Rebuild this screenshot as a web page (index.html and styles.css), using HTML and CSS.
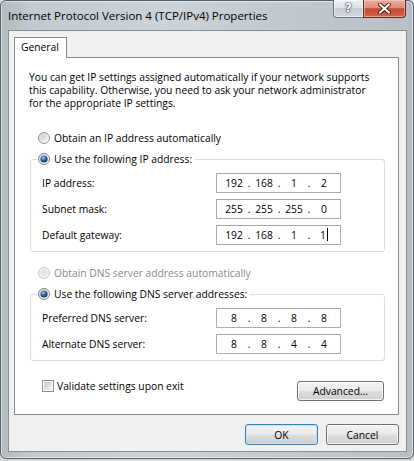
FILE: index.html
```html
<!DOCTYPE html>
<html lang="en">
<head>
<meta charset="utf-8">
<title>Internet Protocol Version 4 (TCP/IPv4) Properties</title>
<link rel="stylesheet" href="styles.css">
</head>
<body>
<svg class="defs" width="0" height="0" aria-hidden="true">
  <defs>
    <linearGradient id="rOuter" x1="0" y1="0" x2="1" y2="1">
      <stop offset="0" stop-color="#dcdcdc"/>
      <stop offset="1" stop-color="#ffffff"/>
    </linearGradient>
    <linearGradient id="rInner" x1="0" y1="0" x2="1" y2="1">
      <stop offset="0" stop-color="#c9c9c9"/>
      <stop offset="1" stop-color="#f4f4f4"/>
    </linearGradient>
    <radialGradient id="rDot" cx="0.4" cy="0.35" r="0.7">
      <stop offset="0" stop-color="#a9d2f2"/>
      <stop offset="0.45" stop-color="#2b6aa0"/>
      <stop offset="1" stop-color="#0b2a4c"/>
    </radialGradient>
    <linearGradient id="cInner" x1="0" y1="0" x2="1" y2="1">
      <stop offset="0" stop-color="#c6cacf"/>
      <stop offset="1" stop-color="#f3f3f3"/>
    </linearGradient>
  </defs>
</svg>
<div class="window">
  <div class="titlebar">
    <div class="title">Internet Protocol Version 4 (TCP/IPv4) Properties</div>
    <div class="caption">
      <div class="cap-help">?</div>
      <div class="cap-close">
        <svg width="13" height="11" viewBox="0 0 13 11">
          <path d="M2 1.5 L11 9.5 M11 1.5 L2 9.5" stroke="#4a1c14" stroke-width="4" stroke-linecap="round"/>
          <path d="M2 1.5 L11 9.5 M11 1.5 L2 9.5" stroke="#ffffff" stroke-width="2.2" stroke-linecap="round"/>
        </svg>
      </div>
    </div>
  </div>
  <div class="client">
    <div class="tabs"><div class="tab">General</div></div>
    <div class="panel">
      <p class="intro">You can get IP settings assigned automatically if your network supports<br>this capability. Otherwise, you need to ask your network administrator<br>for the appropriate IP settings.</p>

      <div class="opt opt-first">
        <svg class="radio" width="12" height="12" viewBox="0 0 12 12"><circle cx="6" cy="6" r="5.5" fill="url(#rOuter)" stroke="#8e8f8f"/><circle cx="6" cy="6" r="3.4" fill="url(#rInner)"/></svg>
        <span>Obtain an IP address automatically</span>
      </div>

      <fieldset class="group">
        <legend class="legend">
          <svg class="radio" width="12" height="12" viewBox="0 0 12 12"><circle cx="6" cy="6" r="5.5" fill="url(#rOuter)" stroke="#7f8488"/><circle cx="6" cy="6" r="3.6" fill="url(#rDot)"/></svg>
          <span>Use the following IP address:</span>
        </legend>
        <div class="rows">
          <div class="field">
            <span class="label">IP address:</span>
            <div class="ip"><span class="oct">192</span><span class="dot">.</span><span class="oct">168</span><span class="dot">.</span><span class="oct">1</span><span class="dot">.</span><span class="oct">2</span></div>
          </div>
          <div class="field">
            <span class="label">Subnet mask:</span>
            <div class="ip"><span class="oct">255</span><span class="dot">.</span><span class="oct">255</span><span class="dot">.</span><span class="oct">255</span><span class="dot">.</span><span class="oct">0</span></div>
          </div>
          <div class="field">
            <span class="label">Default gateway:</span>
            <div class="ip"><span class="oct">192</span><span class="dot">.</span><span class="oct">168</span><span class="dot">.</span><span class="oct">1</span><span class="dot">.</span><span class="oct">1<span class="caret"></span></span></div>
          </div>
        </div>
      </fieldset>

      <div class="opt opt-dns disabled">
        <svg class="radio" width="12" height="12" viewBox="0 0 12 12"><circle cx="6" cy="6" r="5.5" fill="#f4f4f4" stroke="#c4c6c8"/><circle cx="6" cy="6" r="3.4" fill="#e6e6e6"/></svg>
        <span>Obtain DNS server address automatically</span>
      </div>

      <fieldset class="group">
        <legend class="legend">
          <svg class="radio" width="12" height="12" viewBox="0 0 12 12"><circle cx="6" cy="6" r="5.5" fill="url(#rOuter)" stroke="#7f8488"/><circle cx="6" cy="6" r="3.6" fill="url(#rDot)"/></svg>
          <span>Use the following DNS server addresses:</span>
        </legend>
        <div class="rows">
          <div class="field">
            <span class="label">Preferred DNS server:</span>
            <div class="ip"><span class="oct">8</span><span class="dot">.</span><span class="oct">8</span><span class="dot">.</span><span class="oct">8</span><span class="dot">.</span><span class="oct">8</span></div>
          </div>
          <div class="field">
            <span class="label">Alternate DNS server:</span>
            <div class="ip"><span class="oct">8</span><span class="dot">.</span><span class="oct">8</span><span class="dot">.</span><span class="oct">4</span><span class="dot">.</span><span class="oct">4</span></div>
          </div>
        </div>
      </fieldset>

      <div class="bottom">
        <div class="check">
          <svg class="box" width="12" height="12" viewBox="0 0 12 12"><rect x="0.5" y="0.5" width="11" height="11" fill="#ffffff" stroke="#8e8f8f"/><rect x="2" y="2" width="8" height="8" fill="url(#cInner)"/></svg>
          <span>Validate settings upon exit</span>
        </div>
        <div class="btn btn-adv">Advanced...</div>
      </div>
    </div>
    <div class="actions">
      <div class="btn btn-ok">OK</div>
      <div class="btn btn-cancel">Cancel</div>
    </div>
  </div>
</div>
</body>
</html>
```
FILE: styles.css
```css
html, body {
  margin: 0;
  padding: 0;
}
body {
  width: 414px;
  height: 461px;
  overflow: hidden;
  background: #d4d8da;
  font-family: "Open Sans", "Liberation Sans", sans-serif;
  color: #000;
}
.defs {
  display: block;
  width: 0;
  height: 0;
  overflow: hidden;
}
.window {
  width: 414px;
  height: 459px;
  box-sizing: border-box;
  border: 1px solid #56606a;
  border-radius: 6px;
  background: linear-gradient(90deg, #b1bcbd 0%, #c2cbd2 8%, #ccd3d9 40%, #bfc8cf 75%, #b6c0c6 100%);
  box-shadow: inset 0 0 0 1px rgba(255, 255, 255, 0.55);
  display: flex;
  flex-direction: column;
}
.titlebar {
  height: 29px;
  display: flex;
  align-items: flex-start;
  flex: none;
}
.title {
  flex: 1;
  font-size: 11.5px;
  line-height: 29px;
  padding-left: 7px;
  white-space: nowrap;
}
.caption {
  display: flex;
  margin-top: -1px;
  margin-right: 7px;
}
.cap-help {
  width: 30px;
  height: 18px;
  box-sizing: border-box;
  border: 1px solid #6b7580;
  border-top: none;
  border-right: none;
  border-radius: 0 0 0 4px;
  background: linear-gradient(#eef1f4 0%, #dde2e7 45%, #c4ccd4 50%, #d2d9df 100%);
  box-shadow: inset 0 0 0 1px rgba(255, 255, 255, 0.6);
  color: #fff;
  font-family: "DejaVu Sans", sans-serif;
  font-weight: bold;
  font-size: 12px;
  line-height: 17px;
  text-align: center;
  text-shadow: 0 0 1px #2e3640, 0 0 2px #4a5460, 0 0 1px #2e3640;
}
.cap-close {
  width: 43px;
  height: 18px;
  box-sizing: border-box;
  border: 1px solid #5c2a20;
  border-top: none;
  border-radius: 0 0 4px 0;
  background: linear-gradient(#e9ab9c 0%, #dc8d7b 45%, #c6482f 52%, #d3644c 100%);
  box-shadow: inset 0 0 0 1px rgba(255, 220, 210, 0.5);
  display: flex;
  align-items: center;
  justify-content: center;
}
.client {
  margin: 0 6px 0 7px;
  box-sizing: border-box;
  border: 1px solid #868e96;
  background: #f0f0f0;
  padding: 6px 7px 6px 5px;
  display: flex;
  flex-direction: column;
  flex: none;
}
.tabs {
  display: flex;
}
.tab {
  position: relative;
  z-index: 1;
  width: 53px;
  height: 21px;
  box-sizing: border-box;
  margin-bottom: -1px;
  border: 1px solid #898c95;
  border-bottom: none;
  background: #fff;
  padding-left: 6px;
  font-size: 10.3px;
  line-height: 19px;
}
.panel {
  width: 385px;
  box-sizing: border-box;
  border: 1px solid #898c95;
  background: #fff;
  padding: 13px 13px 13px 15px;
  font-size: 10.3px;
}
.intro {
  margin: 0 0 0 -1px;
  line-height: 13px;
  white-space: nowrap;
}
.opt {
  display: flex;
  align-items: center;
  height: 16px;
  margin-left: 8px;
  white-space: nowrap;
}
.opt-first {
  margin-top: 20px;
}
.opt-dns {
  margin-top: 13px;
}
.disabled {
  color: #8a8a8a;
}
.radio, .box {
  display: block;
  flex: none;
  margin-right: 4px;
}
.group {
  margin: 5px 0 0;
  padding: 6px 0 6px 0;
  border: 1px solid #d5dfe5;
  border-radius: 3px;
  min-width: 0;
}
.legend {
  display: flex;
  align-items: center;
  height: 16px;
  margin-left: 6px;
  padding: 0 3px 0 1px;
  white-space: nowrap;
}
.rows {
  padding-left: 11px;
}
.field {
  display: flex;
  align-items: center;
  height: 20px;
}
.field + .field {
  margin-top: 6px;
}
.label {
  width: 174px;
  flex: none;
  white-space: nowrap;
}
.ip {
  display: flex;
  align-items: center;
  width: 125px;
  height: 20px;
  box-sizing: border-box;
  border: 1px solid #abadb3;
  border-top-color: #a2a6ab;
  padding-left: 5px;
  background: #fff;
}
.oct {
  width: 24px;
  text-align: center;
}
.dot {
  width: 6px;
  text-align: center;
}
.caret {
  display: inline-block;
  width: 1px;
  height: 13px;
  margin-left: 1px;
  background: #000;
  vertical-align: -2px;
}
.bottom {
  display: flex;
  justify-content: space-between;
  align-items: flex-start;
  margin-top: 17px;
}
.check {
  display: flex;
  align-items: center;
  height: 16px;
  margin-left: 12px;
  white-space: nowrap;
}
.check .box {
  margin-right: 3px;
}
.btn {
  box-sizing: border-box;
  border: 1px solid #707070;
  border-radius: 3px;
  background: linear-gradient(#f2f2f2 0%, #ebebeb 48%, #dddddd 52%, #cfcfcf 100%);
  box-shadow: inset 0 0 0 1px rgba(255, 255, 255, 0.75);
  display: flex;
  align-items: center;
  justify-content: center;
  font-size: 10.3px;
  white-space: nowrap;
}
.btn-adv {
  width: 87px;
  height: 20px;
  margin-top: 3px;
  margin-right: 1px;
}
.actions {
  display: flex;
  justify-content: flex-end;
  gap: 8px;
  margin-top: 9px;
}
.btn-ok, .btn-cancel {
  width: 73px;
  height: 21px;
}
.btn-ok {
  border-color: #3c7fb1;
  box-shadow: inset 0 0 0 1px #bfe3f7;
}
```
